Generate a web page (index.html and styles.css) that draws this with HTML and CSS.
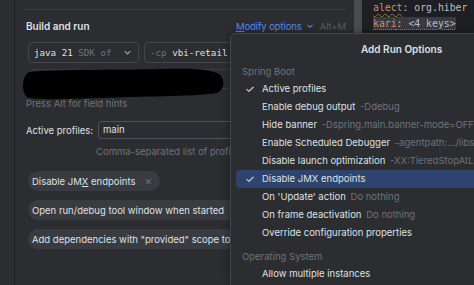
FILE: index.html
```html
<!DOCTYPE html>
<html lang="en">
<head>
    <meta charset="UTF-8">
    <title>Run configuration</title>
    <link rel="stylesheet" href="styles.css">
</head>
<body>
    <div class="window">
        <div class="gutter"></div>

        <!-- run configuration form -->
        <div class="settings">
            <div class="rule"></div>
            <div class="section-head">
                <span class="section-title">Build and run</span>
                <span class="modify">
                    <span class="modify-link"><u>M</u>odify options</span>
                    <svg class="chevron" width="8" height="8" viewBox="0 0 8 8"><path d="M1.5 2.8 4 5.3 6.5 2.8" fill="none" stroke="currentColor" stroke-width="1.1"/></svg>
                    <span class="shortcut">Alt+M</span>
                </span>
            </div>

            <div class="field-row">
                <div class="combo combo-jdk">
                    <span>java 21 <span class="dim">SDK of</span></span>
                    <svg class="combo-arrow" width="9" height="9" viewBox="0 0 8 8"><path d="M1.5 2.8 4 5.3 6.5 2.8" fill="none" stroke="#9da0a8" stroke-width="1.1"/></svg>
                </div>
                <div class="combo combo-cp"><span><span class="dim">-cp</span> vbi-retail</span></div>
            </div>

            <div class="hidden-field">
                <svg class="redact" width="204" height="32" viewBox="0 0 204 32">
                    <path d="M8 4 C40 1 90 2 140 1 C170 0 190 1 198 6 C205 11 203 22 196 25 C170 29 120 28 80 30 C50 31 20 32 8 30 C0 28 0 8 8 4 Z" fill="#000"/>
                </svg>
            </div>

            <p class="hint">Press Alt for field hints</p>

            <div class="profile-row">
                <span class="label">Active profiles:</span>
                <div class="text-input">main</div>
            </div>
            <p class="hint hint-indent">Comma-separated list of profile</p>

            <div class="chip chip-short"><span>Disable JM<u>X</u> endpoints</span><span class="chip-close">×</span></div>
            <div class="chip"><span>Open run/debug tool window when started</span></div>
            <div class="chip"><span>Add dependencies with "provided" scope to</span></div>
        </div>

        <div class="scrollbar"></div>

        <!-- editor peeking through on the right -->
        <div class="editor">
            <div class="code-line"><span class="key squiggle">alect</span>: org.hiber</div>
            <div class="code-line"><span class="folded"><span class="key">kari</span>: &lt;4 keys&gt;</span></div>
        </div>

        <!-- popup menu -->
        <div class="popup">
            <div class="popup-title">Add Run Options</div>
            <div class="group">Spring Boot</div>
            <div class="item"><span class="check">✓</span>Active profiles</div>
            <div class="item">Enable debug output <span class="dim">-Ddebug</span></div>
            <div class="item">Hide banner <span class="dim">-Dspring.main.banner-mode=OFF</span></div>
            <div class="item">Enable Scheduled Debugger <span class="dim">-agentpath:.../libs</span></div>
            <div class="item">Disable launch optimization <span class="dim">-XX:TieredStopAtL</span></div>
            <div class="item selected"><span class="check">✓</span>Disable JMX endpoints</div>
            <div class="item">On 'Update' action <span class="dim">Do nothing</span></div>
            <div class="item">On frame deactivation <span class="dim">Do nothing</span></div>
            <div class="item">Override configuration properties</div>
            <div class="group group-gap">Operating System</div>
            <div class="item">Allow multiple instances</div>
        </div>
    </div>
</body>
</html>
```

FILE: styles.css
```css
body {
    margin: 0;
    background-color: #2b2d30;
    color: #dfe1e5;
    font-family: Inter, "Noto Sans", sans-serif;
    font-size: 9.5px;
    overflow: hidden;
}

.window {
    display: flex;
    height: 285px;
    position: relative;
}

.gutter {
    width: 14px;
    flex: none;
    border-right: 1px solid #1e1f22;
}

.settings {
    flex: 1;
    min-width: 0;
    padding: 9px 8px 0 11px;
    white-space: nowrap;
    overflow: hidden;
}

.rule {
    border-top: 1px solid #393b40;
    margin-left: -2px;
}

.section-head {
    display: flex;
    justify-content: space-between;
    align-items: center;
    height: 32px;
}

.section-title {
    font-weight: 600;
    font-size: 10px;
}

.modify {
    display: flex;
    align-items: center;
    gap: 4px;
    color: #548af7;
    letter-spacing: -0.1px;
}

.modify u {
    text-underline-offset: 1px;
}

.shortcut {
    color: #5a5d63;
    margin-left: 2px;
}

.dim {
    color: #6f737a;
}

.field-row {
    display: flex;
    gap: 5px;
    margin-left: 2px;
}

.combo {
    height: 21px;
    box-sizing: border-box;
    border: 1px solid #43454a;
    border-radius: 4px;
    display: flex;
    align-items: center;
    justify-content: space-between;
    padding: 0 6px 0 5px;
    font-family: "DejaVu Sans Mono", "Liberation Mono", monospace;
    font-size: 9.2px;
}

.combo-jdk {
    width: 111px;
    flex: none;
}

.combo-cp {
    flex: 1;
}

.hidden-field {
    position: relative;
    height: 20px;
    margin: 6px 0 0 2px;
    border: 1px solid #393b40;
    border-radius: 4px;
    box-sizing: border-box;
}

.redact {
    position: absolute;
    left: -8px;
    top: -2px;
}

.hint {
    margin: 8px 0 0;
    line-height: 14px;
    color: #6f737a;
}

.hint-indent {
    margin-top: 6px;
    padding-left: 70px;
}

.profile-row {
    display: flex;
    align-items: center;
    margin-top: 10px;
}

.label {
    width: 72px;
    flex: none;
}

.text-input {
    flex: 1;
    height: 18px;
    box-sizing: border-box;
    border: 1px solid #4e5157;
    border-radius: 3px;
    padding-left: 4px;
    line-height: 16px;
}

.chip {
    display: flex;
    align-items: center;
    height: 20px;
    margin: 12px 0 0 2px;
    padding: 0 8px 0 4px;
    border-radius: 10px;
    background-color: #393b40;
}

.chip + .chip {
    margin-top: 9px;
}

.chip-short {
    width: 132px;
    box-sizing: border-box;
}

.chip-close {
    margin-left: auto;
    color: #6f737a;
    font-size: 11px;
}

.scrollbar {
    width: 8px;
    height: 33px;
    flex: none;
    background-color: #4a4c50;
}

.editor {
    width: 112px;
    flex: none;
    height: 33px;
    background-color: #1e1f22;
    padding-left: 11px;
    box-sizing: border-box;
    overflow: hidden;
    white-space: nowrap;
    font-family: "DejaVu Sans Mono", "Liberation Mono", monospace;
    font-size: 9.8px;
    color: #bcbec4;
}

.code-line {
    height: 16px;
    line-height: 16px;
}

.key {
    color: #cf8e6d;
}

.squiggle {
    text-decoration: underline wavy #8a7a3a;
    text-underline-offset: 2px;
}

.folded {
    background-color: #393b40;
    padding: 1px 0;
    text-decoration: underline dotted #8a8a4a;
    text-underline-offset: 2px;
}

.popup {
    position: absolute;
    left: 230px;
    top: 33px;
    right: 0;
    bottom: 0;
    background-color: #2b2d30;
    border-top: 1px solid #43454a;
    border-left: 1px solid #43454a;
    border-top-left-radius: 6px;
    white-space: nowrap;
    overflow: hidden;
    box-shadow: 0 0 8px rgba(0, 0, 0, 0.4);
}

.popup-title {
    line-height: 30px;
    padding-left: 130px;
    font-weight: 600;
    font-size: 10px;
}

.group {
    line-height: 16px;
    padding-left: 11px;
    color: #6f737a;
}

.group-gap {
    margin-top: 7px;
}

.item {
    position: relative;
    height: 18px;
    line-height: 18px;
    margin-left: 5px;
    padding-left: 26px;
    border-radius: 4px 0 0 4px;
}

.item .dim {
    margin-left: 2px;
}

.check {
    position: absolute;
    left: 9px;
    top: 0;
    font-size: 11px;
}

.selected {
    background-color: #2e436e;
}
```
